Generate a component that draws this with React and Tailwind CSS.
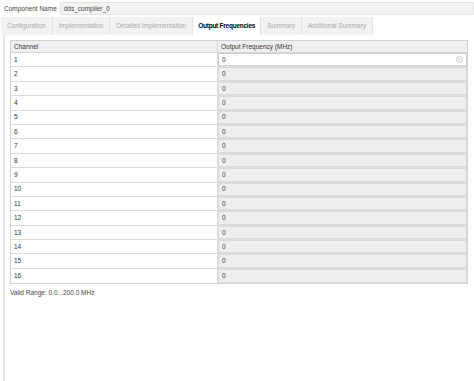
import React from 'react';

const tabs = [
    { label: 'Configuration' },
    { label: 'Implementation' },
    { label: 'Detailed Implementation' },
    { label: 'Output Frequencies', active: true },
    { label: 'Summary' },
    { label: 'Additional Summary' },
];

const channels = Array.from({ length: 16 }, (_, i) => i + 1);

const ClearIcon = () => (
    <svg width="7" height="7" viewBox="0 0 10 10" className="shrink-0">
        <circle cx="5" cy="5" r="4.3" fill="none" stroke="#b5b5b5" strokeWidth="1" />
        <path d="M3.3 3.3 L6.7 6.7 M6.7 3.3 L3.3 6.7" stroke="#b5b5b5" strokeWidth="1" />
    </svg>
);

const App = () => {
    return (
        <div
            className="w-[474px] h-[381px] bg-white flex flex-col text-[6.5px] text-[#333] overflow-hidden"
            style={{ fontFamily: '"Liberation Sans", Arial, sans-serif' }}
        >
            {/* Component name */}
            <div className="h-[17px] flex items-center pl-[4px] gap-[3px] shrink-0">
                <span className="text-[#444]">Component Name</span>
                <div className="flex-1 h-[13px] bg-[#f3f3f3] border border-[#e4e4e4] flex items-center px-[3px] text-[#444]">
                    dds_compiler_0
                </div>
            </div>

            {/* Tabs */}
            <div className="h-[18px] flex items-stretch shrink-0 pl-[1px]">
                {tabs.map(tab => (
                    <div
                        key={tab.label}
                        className={
                            tab.active
                                ? 'flex items-center px-[5px] bg-white text-black font-bold tracking-[-0.25px] border-r border-[#e2e2e2]'
                                : 'flex items-center px-[6px] bg-[#f2f2f2] text-[#a8a8a8] border-r border-[#e2e2e2]'
                        }
                    >
                        {tab.label}
                    </div>
                ))}
                <div className="flex-1 bg-white" />
            </div>

            {/* Content panel */}
            <div className="flex-1 ml-[3px] border-l-2 border-[#e6e6e6] pl-[5px] pr-[6px] pt-[5px]">
                <div className="border border-[#d2d2d2]">
                    <div className="h-[12px] flex bg-[#efefef] border-b border-[#d6d6d6]">
                        <div className="w-[207px] flex items-center px-[3px] border-r border-[#d6d6d6]">Channel</div>
                        <div className="flex-1 flex items-center px-[3px]">Output Frequency (MHz)</div>
                    </div>
                    {channels.map(ch => (
                        <div key={ch} className="h-[14.4px] flex border-b border-[#dcdcdc] last:border-b-0">
                            <div className="w-[207px] flex items-center px-[3px] bg-white border-r border-[#dcdcdc]">{ch}</div>
                            {ch === 1 ? (
                                <div className="flex-1 flex items-center justify-between px-[3px] bg-white border border-[#cfcfcf]">
                                    <span>0</span>
                                    <ClearIcon />
                                </div>
                            ) : (
                                <div className="flex-1 flex items-center px-[3px] bg-[#eeeeee] border border-[#dadada]">
                                    0
                                </div>
                            )}
                        </div>
                    ))}
                </div>
                <div className="mt-[4px] text-[#444]">Valid Range: 0.0...200.0 MHz</div>
            </div>
        </div>
    );
};

export default App;
